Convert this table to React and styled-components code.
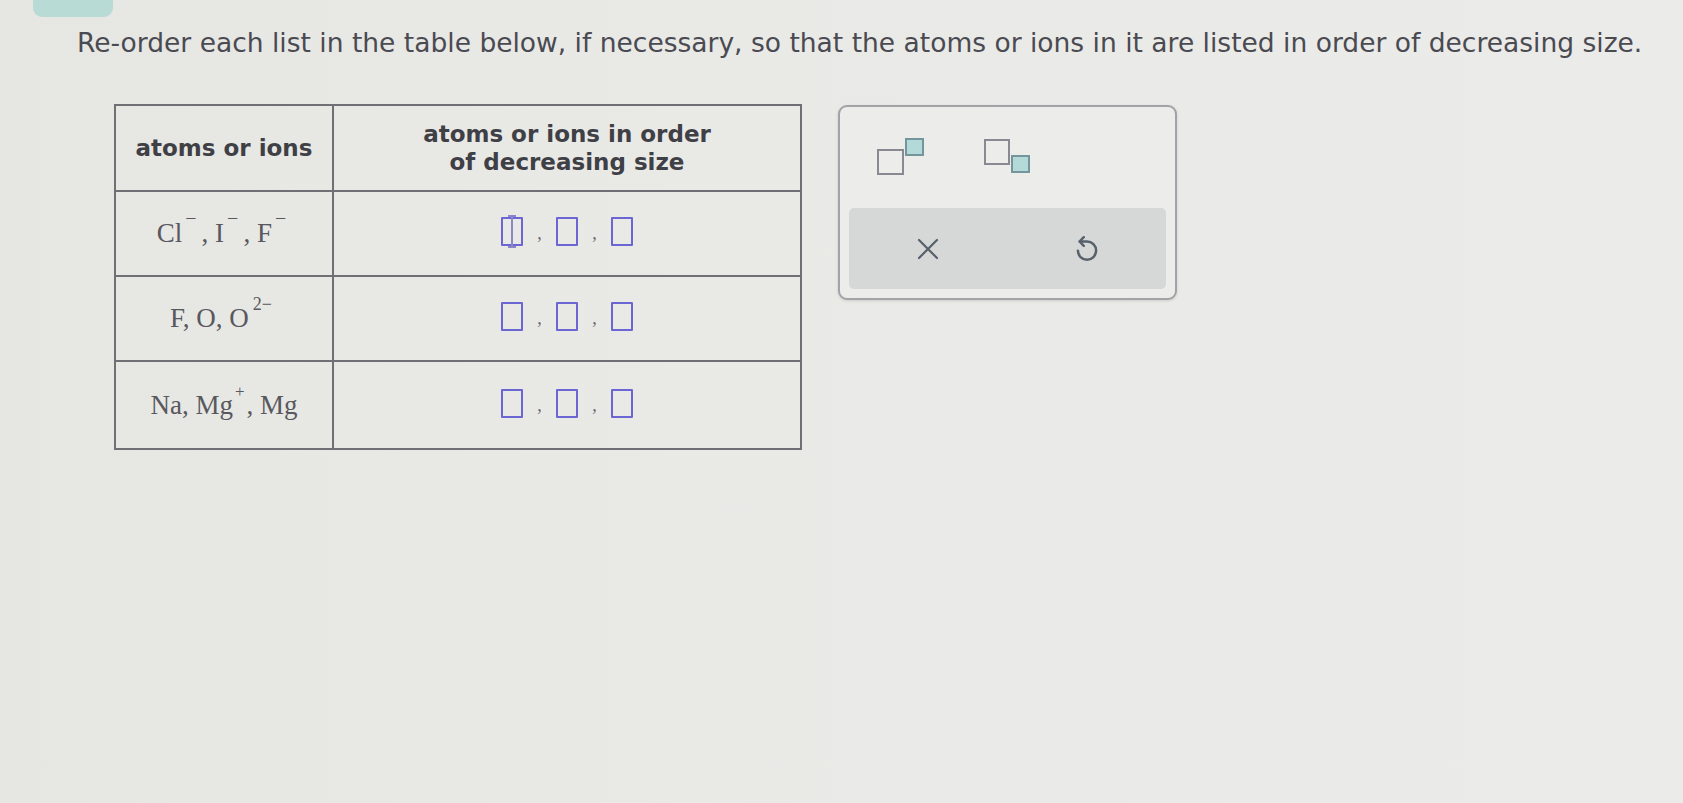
import React from 'react';
import styled, { createGlobalStyle } from 'styled-components';

const Global = createGlobalStyle`
  html, body { margin: 0; padding: 0; background: #e9e9e6; }
  body { font-family: "DejaVu Sans", Verdana, sans-serif; }
`;

const Page = styled.div`
  min-height: 803px;
  background: linear-gradient(90deg, #e6e6e3 0%, #e9e9e6 40%, #ebebe9 100%);
`;

const TopTab = styled.div`
  width: 80px;
  height: 17px;
  margin-left: 33px;
  background: #b8dbd6;
  border-radius: 0 0 9px 9px;
`;

const Title = styled.h1`
  margin: 11px 0 0 77px;
  font-size: 26.5px;
  line-height: 30px;
  font-weight: normal;
  color: #4a4a52;
  white-space: nowrap;
`;

const Content = styled.div`
  display: flex;
  align-items: flex-start;
  gap: 36px;
  margin-top: 46px;
  padding-left: 114px;
`;

const Table = styled.table`
  border-collapse: collapse;
  table-layout: fixed;
  width: 688px;
`;

const Row = styled.tr`
  height: ${p => p.$h}px;
`;

const HeadCell = styled.th`
  border: 2px solid #6f6f74;
  width: ${p => p.$w ? `${p.$w}px` : 'auto'};
  font-family: "DejaVu Sans", Verdana, sans-serif;
  font-weight: bold;
  font-size: 23px;
  line-height: 28px;
  color: #3f3f46;
  text-align: center;
  vertical-align: middle;
  padding: 0;
`;

const Cell = styled.td`
  border: 2px solid #6f6f74;
  text-align: center;
  vertical-align: middle;
  padding: 0;
`;

const Formula = styled.span`
  font-family: "Liberation Serif", "Times New Roman", serif;
  font-size: 27px;
  color: #58585e;
`;

const Sup = styled.sup`
  font-size: ${p => p.$size || 17}px;
  vertical-align: 0;
  position: relative;
  top: -17px;
  margin-left: ${p => p.$l ?? 2}px;
  margin-right: ${p => p.$r ?? 2}px;
`;

const Slots = styled.div`
  display: inline-flex;
  align-items: flex-end;
`;

const Slot = styled.span`
  position: relative;
  display: inline-block;
  width: 18px;
  height: 25px;
  border: 2px solid #6b66d4;
  border-radius: 1px;
`;

const Comma = styled.span`
  display: inline-block;
  width: 33px;
  text-align: center;
  font-family: "Liberation Serif", serif;
  font-size: 18px;
  line-height: 18px;
  color: #66666c;
  margin-bottom: 4px;
`;

const Caret = styled.span`
  position: absolute;
  left: 50%;
  top: -4px;
  bottom: -4px;
  width: 2px;
  margin-left: -1px;
  background: #8a86c8;
  &::before, &::after {
    content: '';
    position: absolute;
    left: -3px;
    width: 8px;
    height: 2px;
    background: #8a86c8;
  }
  &::before { top: 0; }
  &::after { bottom: 0; }
`;

const Panel = styled.div`
  box-sizing: border-box;
  width: 339px;
  height: 195px;
  margin-top: 1px;
  border: 2px solid #a3a3a7;
  border-radius: 9px;
  background: #ececea;
  box-shadow: 0 1px 3px rgba(0, 0, 0, 0.12);
  display: flex;
  flex-direction: column;
  padding: 0 9px 9px 9px;
`;

const ToolRow = styled.div`
  flex: 1;
  display: flex;
  align-items: center;
  gap: 59px;
  padding-left: 28px;
  padding-bottom: 2px;
`;

const ActionBar = styled.div`
  height: 81px;
  display: flex;
  background: #d5d8d6;
  border-radius: 5px;
`;

const ActionButton = styled.button`
  flex: 1;
  border: none;
  background: transparent;
  display: flex;
  align-items: center;
  justify-content: center;
  padding: 0;
  cursor: pointer;
`;

const SuperIcon = () => (
  <svg width="48" height="38" viewBox="0 0 48 38">
    <rect x="1" y="12" width="25" height="24" fill="none" stroke="#8a8890" strokeWidth="2" />
    <rect x="29" y="1" width="17" height="16" fill="#b3dad8" stroke="#73959b" strokeWidth="2" />
  </svg>
);

const SubIcon = () => (
  <svg width="48" height="36" viewBox="0 0 48 36">
    <rect x="1" y="1" width="24" height="24" fill="none" stroke="#8a8890" strokeWidth="2" />
    <rect x="28" y="17" width="17" height="16" fill="#b3dad8" stroke="#73959b" strokeWidth="2" />
  </svg>
);

const CloseIcon = () => (
  <svg width="24" height="24" viewBox="0 0 24 24">
    <path d="M3 3 L21 21 M21 3 L3 21" stroke="#58616b" strokeWidth="2.2" strokeLinecap="round" fill="none" />
  </svg>
);

const UndoIcon = () => (
  <svg width="28" height="30" viewBox="0 0 26 28">
    <path d="M10 3 L6 7 L10 11 M6 7 H13 A8.5 8.5 0 1 1 4.5 15.5" stroke="#58616b" strokeWidth="2.3" strokeLinecap="round" strokeLinejoin="round" fill="none" />
  </svg>
);

const SlotGroup = ({ active }) => (
  <Slots>
    <Slot>{active && <Caret />}</Slot>
    <Comma>,</Comma>
    <Slot />
    <Comma>,</Comma>
    <Slot />
  </Slots>
);

const rows = [
  {
    h: 85,
    f: (<>Cl<Sup $size={20} $l={3} $r={5}>−</Sup>, I<Sup $size={20} $l={3} $r={5}>−</Sup>, F<Sup $size={20} $l={3} $r={5}>−</Sup></>),
    active: true,
  },
  {
    h: 85,
    f: (<>F, O, O<Sup $size={18} $l={4} $r={6}>2−</Sup></>),
  },
  {
    h: 88,
    f: (<>Na, Mg<Sup>+</Sup>, Mg</>),
  },
];

export default function App() {
  return (
    <Page>
      <Global />
      <TopTab />
      <Title>Re-order each list in the table below, if necessary, so that the atoms or ions in it are listed in order of decreasing size.</Title>
      <Content>
        <Table>
          <thead>
            <Row $h={86}>
              <HeadCell $w={216}>atoms or ions</HeadCell>
              <HeadCell>atoms or ions in order<br />of decreasing size</HeadCell>
            </Row>
          </thead>
          <tbody>
            {rows.map((r, i) => (
              <Row key={i} $h={r.h}>
                <Cell><Formula>{r.f}</Formula></Cell>
                <Cell><SlotGroup active={r.active} /></Cell>
              </Row>
            ))}
          </tbody>
        </Table>
        <Panel>
          <ToolRow>
            <SuperIcon />
            <SubIcon />
          </ToolRow>
          <ActionBar>
            <ActionButton aria-label="clear"><CloseIcon /></ActionButton>
            <ActionButton aria-label="undo"><UndoIcon /></ActionButton>
          </ActionBar>
        </Panel>
      </Content>
    </Page>
  );
}
